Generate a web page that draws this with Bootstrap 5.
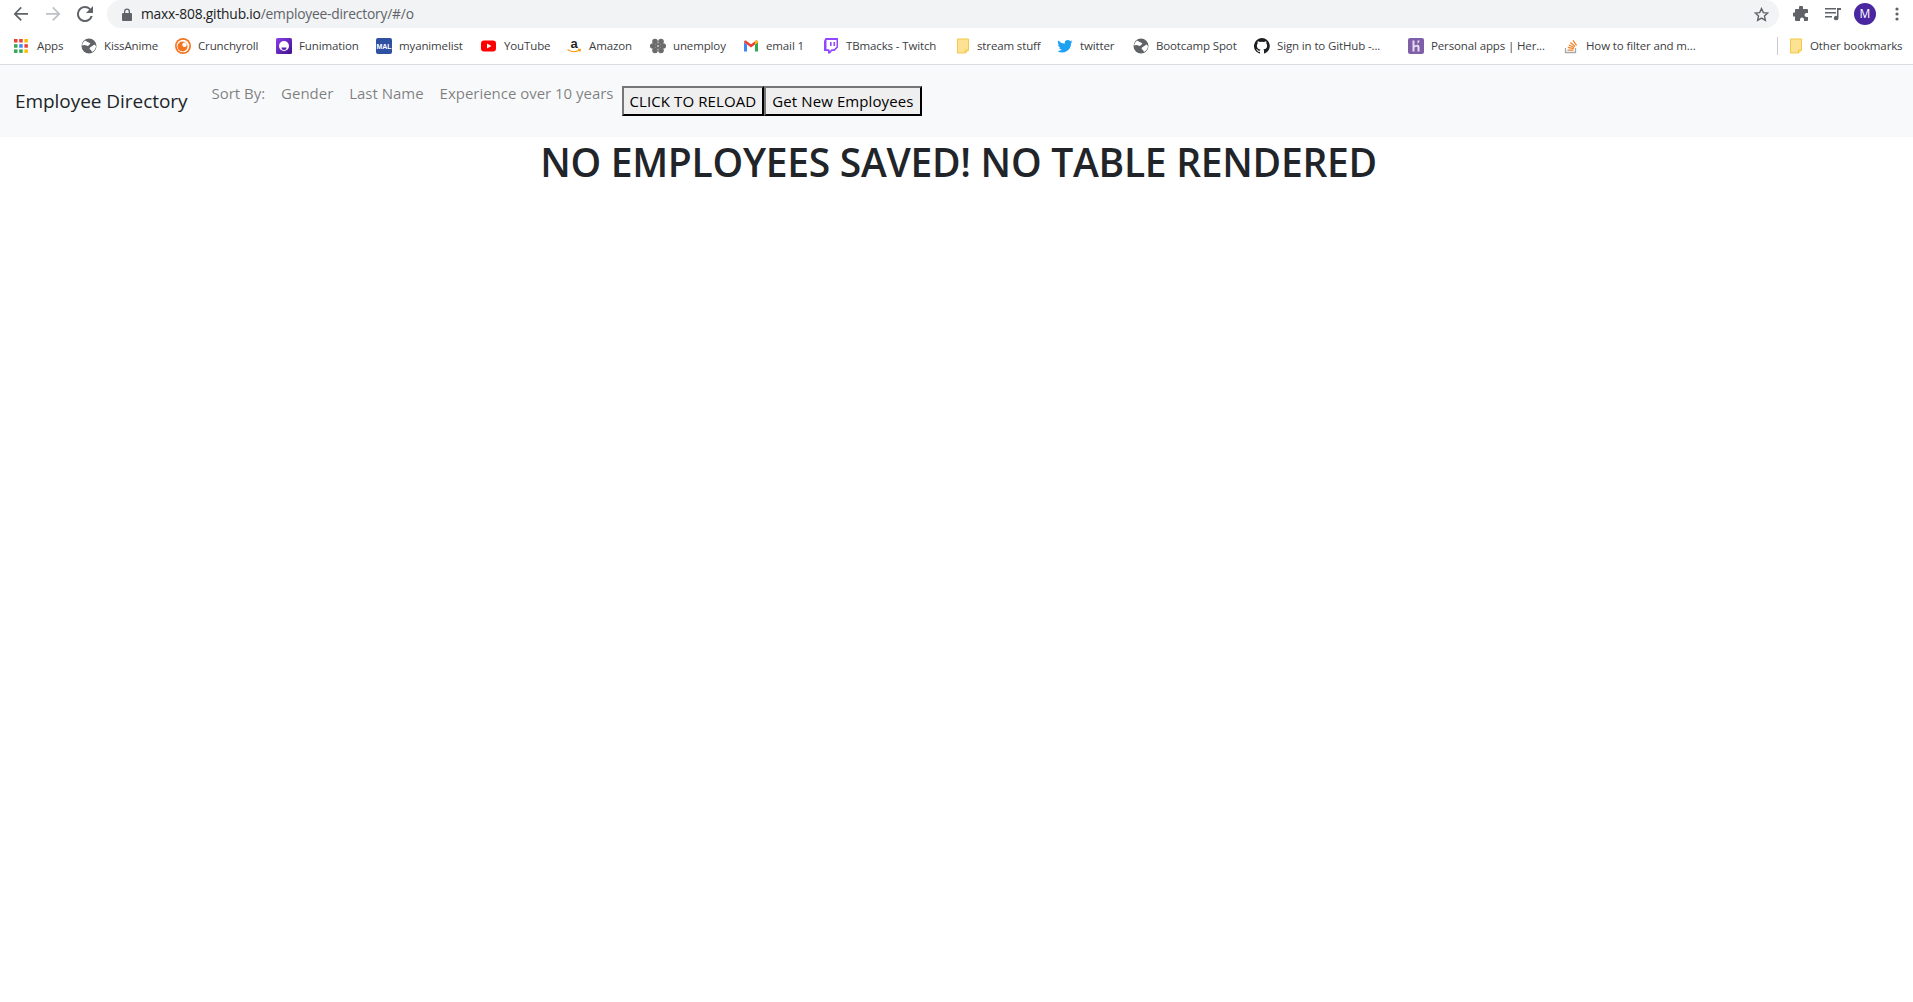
<!DOCTYPE html>
<html lang="en">
<head>
    <meta charset="UTF-8">
    <meta name="viewport" content="width=device-width, initial-scale=1.0">
    <title>Employee Directory</title>
    <link href="https://cdn.jsdelivr.net/npm/bootstrap@5.3.3/dist/css/bootstrap.min.css" rel="stylesheet">
    <style>
        body{
            font-family: "Open Sans", "Noto Sans", sans-serif;
            background-color: #fff;
        }
        .tool-bar{
            height: 28px;
            padding-left: 5px;
        }
        .tool-btn{
            width: 32px;
            height: 28px;
            flex: none;
        }
        .omni-box{
            margin-left: 6px;
            width: 1677px;
            height: 28px;
            background-color: #f1f3f4;
            border-radius: 14px;
            padding: 0 10px 0 15px;
            font-size: 13.8px;
            letter-spacing: -.2px;
            color: #5f6368;
        }
        .omni-host{
            color: #202124;
        }
        .url-text{
            margin-left: 9px;
        }
        .tool-right{
            margin-left: 6px;
        }
        .avatar-m{
            width: 22px;
            height: 22px;
            border-radius: 50%;
            background-color: #4a27a0;
            color: #fff;
            font-size: 12px;
            margin: 0 5px;
        }
        .bm-bar{
            display: grid;
            grid-template-columns: 67px 94px 101px 100px 105px 85px 84px 93px 80px 133px 101px 76px 121px 154px 155px 214px auto;
            height: 37px;
            padding-left: 14px;
            border-bottom: 1px solid #dadce0;
            font-size: 11.5px;
            letter-spacing: -.13px;
            color: #3c4043;
            white-space: nowrap;
        }
        .bm-item{
            display: flex;
            align-items: center;
            gap: 7px;
        }
        .bm-item svg{
            flex: none;
        }
        .bm-other{
            border-left: 1px solid #c9cbce;
            height: 18px;
            align-self: center;
            padding-left: 11px;
        }
        .page-nav{
            height: 72px;
            padding: 8px 15px;
            align-items: center;
            flex-wrap: nowrap;
            justify-content: flex-start;
        }
        .page-nav .navbar-brand{
            font-size: 19px;
            letter-spacing: -.05px;
            color: #212529;
            margin-right: 16px;
        }
        .page-nav .nav-link{
            color: rgba(0, 0, 0, .5);
            font-size: 15px;
            letter-spacing: -.02px;
            line-height: 24px;
        }
        .sort-links{
            align-self: flex-start;
        }
        .raw-btn{
            height: 30px;
            background-color: #efefef;
            color: #000;
            border: 2px outset #212121;
            border-top-color: #767676;
            border-left-color: #767676;
            padding: 0 6px;
            font-family: inherit;
            font-size: 15px;
            letter-spacing: .1px;
            white-space: nowrap;
        }
        .empty-title{
            font-size: 39px;
            font-weight: 600;
            letter-spacing: -.27px;
            line-height: 50px;
            padding-left: 4px;
            color: #212529;
        }
    </style>
</head>
<body>
    <div class="tool-bar d-flex align-items-center">
        <div class="tool-btn d-flex align-items-center justify-content-center">
            <svg width="16" height="16" viewBox="0 0 16 16"><path d="M15 7H3.800l5-5L7.600 .8 .6 8l7 7 1.200-1.200-5-5H15z" fill="#5f6368"/></svg>
        </div>
        <div class="tool-btn d-flex align-items-center justify-content-center">
            <svg width="16" height="16" viewBox="0 0 16 16"><path d="M1 7h11.200l-5-5L8.400 .8l7 7.200-7 7-1.200-1.200 5-5H1z" fill="#bdc1c6"/></svg>
        </div>
        <div class="tool-btn d-flex align-items-center justify-content-center">
            <svg width="16" height="16" viewBox="0 0 16 16"><path d="M13.600 2.400A7.900 7.900 0 0 0 8 0a8 8 0 1 0 7.700 10h-2.100A6 6 0 1 1 8 2c1.700 0 3.100 .7 4.200 1.800L9 7h7V0z" fill="#5f6368"/></svg>
        </div>
        <div class="omni-box d-flex align-items-center">
            <svg width="10" height="13" viewBox="0 0 10 13"><path d="M2 5V3.500a3 3 0 0 1 6 0V5h1a1 1 0 0 1 1 1v6a1 1 0 0 1-1 1H1a1 1 0 0 1-1-1V6a1 1 0 0 1 1-1zm1.300 0h3.400V3.500a1.700 1.700 0 0 0-3.400 0z" fill="#5f6368"/></svg>
            <span class="url-text"><span class="omni-host">maxx-808.github.io</span>/employee-directory/#/o</span>
            <svg class="ms-auto" width="15" height="15" viewBox="0 0 24 24"><path d="M12 2.500l2.900 6.500 7.100 .7-5.300 4.700 1.500 7-6.200-3.600-6.200 3.600 1.500-7L2 9.700 9.100 9z" fill="none" stroke="#5f6368" stroke-width="2.200"/></svg>
        </div>
        <div class="tool-right d-flex align-items-center">
            <div class="tool-btn d-flex align-items-center justify-content-center">
                <svg width="16" height="16" viewBox="0 0 16 16"><path d="M6 1.500a2 2 0 0 1 4 0V3h4a1 1 0 0 1 1 1v3h-1.500a2 2 0 0 0 0 4H15v3a1 1 0 0 1-1 1h-3v-1.500a2 2 0 0 0-4 0V15H3a1 1 0 0 1-1-1v-3.500H1a2 2 0 0 1 0-4h1V4a1 1 0 0 1 1-1h3z" fill="#5f6368"/></svg>
            </div>
            <div class="tool-btn d-flex align-items-center justify-content-center">
                <svg width="16" height="14" viewBox="0 0 16 14"><path d="M0 1h11v1.500H0zM0 5h11v1.500H0zM0 9h7v1.500H0zM12 1h4v2h-2.500v8a2.300 2.300 0 1 1-1.500-2.100z" fill="#5f6368"/></svg>
            </div>
            <div class="avatar-m d-flex align-items-center justify-content-center flex-none">M</div>
            <div class="tool-btn d-flex align-items-center justify-content-center">
                <svg width="4" height="14" viewBox="0 0 4 14"><circle cx="2" cy="2" r="1.600" fill="#5f6368"/><circle cx="2" cy="7" r="1.600" fill="#5f6368"/><circle cx="2" cy="12" r="1.600" fill="#5f6368"/></svg>
            </div>
        </div>
    </div>

    <div class="bm-bar">
        <div class="bm-item">
            <svg width="16" height="16" viewBox="0 0 16 16">
                <rect x="0" y="1" width="3.500" height="3.500" fill="#ea4335"/><rect x="5.200" y="1" width="3.500" height="3.500" fill="#ea4335"/><rect x="10.400" y="1" width="3.500" height="3.500" fill="#fbbc04"/>
                <rect x="0" y="6.200" width="3.500" height="3.500" fill="#34a853"/><rect x="5.200" y="6.200" width="3.500" height="3.500" fill="#4285f4"/><rect x="10.400" y="6.200" width="3.500" height="3.500" fill="#ea4335"/>
                <rect x="0" y="11.400" width="3.500" height="3.500" fill="#34a853"/><rect x="5.200" y="11.400" width="3.500" height="3.500" fill="#34a853"/><rect x="10.400" y="11.400" width="3.500" height="3.500" fill="#fbbc04"/>
            </svg>
            <span>Apps</span>
        </div>
        <div class="bm-item">
            <svg width="16" height="16" viewBox="0 0 16 16"><circle cx="8" cy="8" r="7.500" fill="#5f6368"/><path d="M4 2.500L9.500 5.500 7 8 3.500 7 1 7.500Q1.500 4.500 4 2.500zM9 9.500l4.500-3 1.500 1.500c0 2.500-1.500 5-4 6l-1-2-1.500-1z" fill="#fff"/></svg>
            <span>KissAnime</span>
        </div>
        <div class="bm-item">
            <svg width="16" height="16" viewBox="0 0 16 16"><circle cx="8" cy="8" r="8" fill="#f47521"/><circle cx="8" cy="8" r="6.300" fill="#fff"/><circle cx="7.500" cy="8.500" r="5" fill="#f47521"/><circle cx="9.500" cy="6.800" r="2.200" fill="#fff"/></svg>
            <span>Crunchyroll</span>
        </div>
        <div class="bm-item">
            <svg width="16" height="16" viewBox="0 0 16 16"><defs><linearGradient id="funi" x1="0" y1="0" x2="1" y2="1"><stop offset="0" stop-color="#8b3fe8"/><stop offset="1" stop-color="#41108f"/></linearGradient></defs><rect width="16" height="16" rx="1.500" fill="url(#funi)"/><circle cx="8" cy="8" r="5" fill="#fff"/><path d="M5.500 9.500h5a2.500 2.500 0 0 1-5 0z" fill="#5a1fb0"/></svg>
            <span>Funimation</span>
        </div>
        <div class="bm-item">
            <svg width="16" height="16" viewBox="0 0 16 16"><rect width="16" height="16" rx="2" fill="#2e51a2"/><text x="8" y="10.500" text-anchor="middle" font-family="Liberation Sans, sans-serif" font-size="7" font-weight="700" fill="#fff">MAL</text></svg>
            <span>myanimelist</span>
        </div>
        <div class="bm-item">
            <svg width="16" height="16" viewBox="0 0 16 16"><rect y="2.500" width="15" height="11" rx="3" fill="#f00"/><path d="M6 5.500v5L10.500 8z" fill="#fff"/></svg>
            <span>YouTube</span>
        </div>
        <div class="bm-item">
            <svg width="16" height="16" viewBox="0 0 16 16"><text x="8" y="10" text-anchor="middle" font-family="Liberation Sans, sans-serif" font-size="13" font-weight="700" fill="#221f1f">a</text><path d="M1.500 11.500c3.500 2.500 8.500 2.800 12 .5M12 11.200l2.300 .3-.6 2.200" fill="none" stroke="#f90" stroke-width="1.200"/></svg>
            <span>Amazon</span>
        </div>
        <div class="bm-item">
            <svg width="16" height="16" viewBox="0 0 16 16"><g fill="#6b6b6b"><circle cx="5" cy="3.500" r="2.800"/><circle cx="11" cy="3.500" r="2.800"/><circle cx="2.800" cy="8" r="2.800"/><circle cx="13.200" cy="8" r="2.800"/><circle cx="5" cy="12.500" r="2.800"/><circle cx="11" cy="12.500" r="2.800"/><circle cx="8" cy="8" r="3"/></g><circle cx="8" cy="8" r="1" fill="#ccc"/></svg>
            <span>unemploy</span>
        </div>
        <div class="bm-item">
            <svg width="16" height="16" viewBox="0 0 16 16"><path d="M1 13.500V4.200l3 2.200v7.100z" fill="#4285f4"/><path d="M12 13.500V6.400l3-2.200v9.300z" fill="#34a853"/><path d="M1 4.200c0-1.500 1.500-2 2.500-1.300L8 6.200l4.500-3.300c1-.7 2.500-.2 2.500 1.300L12 6.400 8 9.400 4 6.400z" fill="#ea4335"/><path d="M12 2.800v3.600l3-2.200c0-1.500-1.800-2.200-3-1.400z" fill="#fbbc04"/></svg>
            <span>email 1</span>
        </div>
        <div class="bm-item">
            <svg width="16" height="16" viewBox="0 0 16 16"><path d="M2.500 0H15v9.500L11.500 13H9l-2 2.500H5V13H1V3z" fill="#9146ff"/><path d="M3.500 2h10v6.800L11 11.300H8.500l-2 2v-2h-3z" fill="#fff"/><path d="M7 4h1.600v4H7zM10.500 4h1.600v4h-1.600z" fill="#9146ff"/></svg>
            <span>TBmacks - Twitch</span>
        </div>
        <div class="bm-item">
            <svg width="14" height="16" viewBox="0 0 14 16"><path d="M1.500 1h11v11l-3 3h-8z" fill="#fde293" stroke="#f2c94c"/><path d="M9.500 15v-3h3" fill="none" stroke="#f2c94c"/></svg>
            <span>stream stuff</span>
        </div>
        <div class="bm-item">
            <svg width="16" height="16" viewBox="0 0 16 16"><path d="M15.500 3.400c-.6 .3-1.200 .4-1.800 .5 .6-.4 1.100-1 1.400-1.700-.6 .4-1.300 .6-2 .8a3.100 3.100 0 0 0-5.300 2.800A8.800 8.800 0 0 1 1.400 2.500a3.100 3.100 0 0 0 1 4.200c-.5 0-1-.2-1.400-.4 0 1.500 1.100 2.800 2.500 3.100-.5 .1-.9 .1-1.400 0 .4 1.300 1.500 2.100 2.900 2.200A6.300 6.300 0 0 1 .4 12.900 8.800 8.800 0 0 0 14 5.100c.6-.4 1.100-1 1.500-1.700z" fill="#1da1f2"/></svg>
            <span>twitter</span>
        </div>
        <div class="bm-item">
            <svg width="16" height="16" viewBox="0 0 16 16"><circle cx="8" cy="8" r="7.500" fill="#5f6368"/><path d="M4 2.500L9.500 5.500 7 8 3.500 7 1 7.500Q1.500 4.500 4 2.500zM9 9.500l4.500-3 1.500 1.500c0 2.500-1.500 5-4 6l-1-2-1.500-1z" fill="#fff"/></svg>
            <span>Bootcamp Spot</span>
        </div>
        <div class="bm-item">
            <svg width="16" height="16" viewBox="0 0 16 16"><path d="M8 0a8 8 0 0 0-2.500 15.600c.4 .1 .5-.2 .5-.4v-1.400c-2.200 .5-2.700-1-2.700-1-.4-.9-.9-1.200-.9-1.200-.7-.5 .1-.5 .1-.5 .8 .1 1.200 .8 1.200 .8 .7 1.200 1.900 .9 2.300 .7 .1-.5 .3-.9 .5-1.100-1.800-.2-3.600-.9-3.600-4 0-.9 .3-1.600 .8-2.100-.1-.2-.4-1 .1-2.100 0 0 .7-.2 2.200 .8a7.500 7.500 0 0 1 4 0c1.500-1 2.200-.8 2.200-.8 .5 1.100 .2 1.900 .1 2.100 .5 .6 .8 1.300 .8 2.100 0 3.100-1.900 3.700-3.700 3.900 .3 .3 .6 .8 .6 1.500v2.200c0 .2 .1 .5 .6 .4A8 8 0 0 0 8 0z" fill="#1b1f23"/></svg>
            <span>Sign in to GitHub -...</span>
        </div>
        <div class="bm-item">
            <svg width="16" height="16" viewBox="0 0 16 16"><rect width="16" height="16" rx="2" fill="#7e5fa8"/><path d="M4.500 2.500h2v5c1.500-.7 3-1 4-.5s1 1.500 1 2.500v4h-2V9.500c0-.8-.5-1-1.500-.7l-1.500 .6v4.100h-2zM9.500 2.500h2c0 1.500-.7 2.500-2 3.200z" fill="#e5dcf0"/></svg>
            <span>Personal apps | Her...</span>
        </div>
        <div class="bm-item">
            <svg width="16" height="16" viewBox="0 0 16 16"><path d="M2.500 10v4.500h10V10" fill="none" stroke="#a8a8a8" stroke-width="1.300"/><path d="M4.500 12.700h6v-1.300h-6zM4.700 10l6 1.200 .2-1.200-6-1.300zM5.500 7.500l5.500 2.600 .5-1.100L6 6.400zM7 5l4.700 3.900 .8-.9-4.700-4zM9.500 2.800l3.600 4.900 1-.7L10.500 2z" fill="#f48024"/></svg>
            <span>How to filter and m...</span>
        </div>
        <div class="bm-item bm-other">
            <svg width="14" height="16" viewBox="0 0 14 16"><path d="M1.500 1h11v11l-3 3h-8z" fill="#fde293" stroke="#f2c94c"/><path d="M9.500 15v-3h3" fill="none" stroke="#f2c94c"/></svg>
            <span>Other bookmarks</span>
        </div>
    </div>

    <nav class="navbar navbar-expand-lg navbar-light bg-light page-nav">
        <a class="navbar-brand" href="#">Employee Directory</a>
        <ul class="navbar-nav flex-row sort-links">
            <li class="nav-item"><a class="nav-link px-2" href="#">Sort By:</a></li>
            <li class="nav-item"><a class="nav-link px-2" href="#">Gender</a></li>
            <li class="nav-item"><a class="nav-link px-2" href="#">Last Name</a></li>
            <li class="nav-item"><a class="nav-link px-2" href="#">Experience over 10 years</a></li>
        </ul>
        <button type="button" class="raw-btn">CLICK TO RELOAD</button>
        <button type="button" class="raw-btn">Get New Employees</button>
    </nav>

    <h1 class="empty-title text-center m-0">NO EMPLOYEES SAVED! NO TABLE RENDERED</h1>
</body>
</html>
